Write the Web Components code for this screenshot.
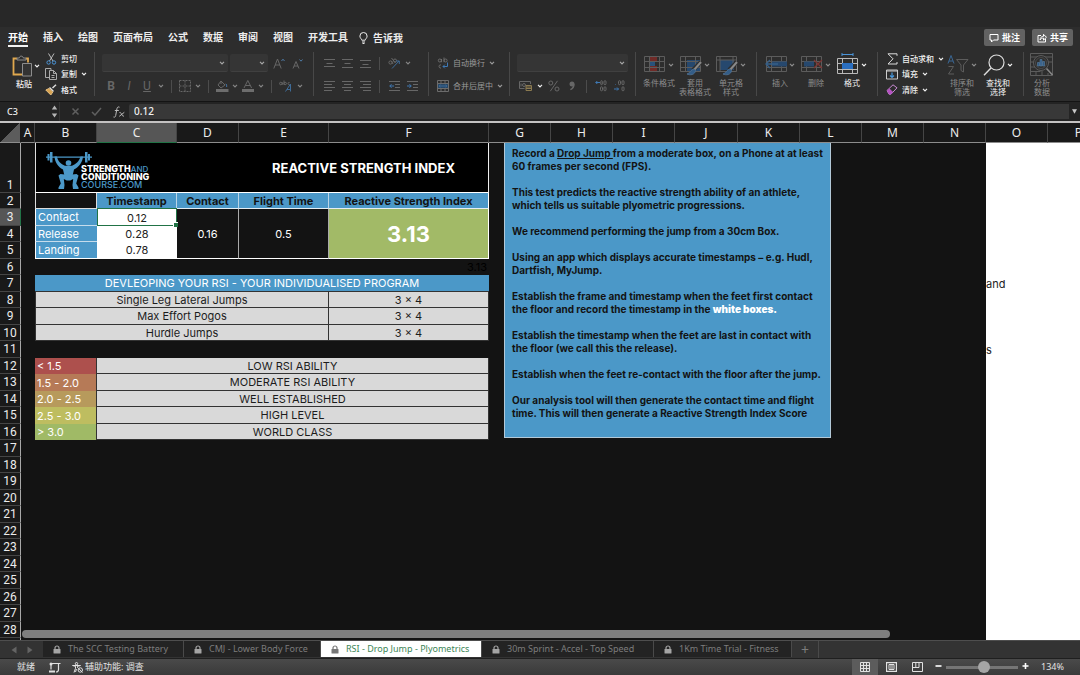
<!DOCTYPE html>
<html lang="zh-CN">
<head>
<meta charset="utf-8">
<title>Reactive Strength Index</title>
<style>
  html, body { margin: 0; height: 100%; background: #2d2d2d; }
  body { font-family: "Noto Sans", "Noto Sans CJK SC", sans-serif; color: #ececec; }
</style>
</head>
<body>
<spreadsheet-app></spreadsheet-app>

<script>
const chev = '<app-icon name="chev"></app-icon>';

const gridLines = (w, h) => `<path d="M.5 .5h${w - 1}v${h - 1}h-${w - 1}zM.5 ${Math.round(h / 3)}.5h${w - 1}M.5 ${Math.round(h * 2 / 3)}.5h${w - 1}M${Math.round(w / 4)}.5 .5v${h - 1}M${Math.round(w * 3 / 4) - 1}.5 .5v${h - 1}"/>`;

const ICONS = {
  chev: [6, 4, '<path d="M1 .8l2 2 2-2" stroke-width="1.2"/>'],
  bulb: [9, 12, '<path d="M2.8 8.2C2.6 6.900 .9 6 .9 4.100a3.600 3.600 0 0 1 7.200 0c0 1.900-1.700 2.800-1.900 4.100zM3 10h3M3.500 11.500h2"/>'],
  comment: [10, 10, '<path d="M1 1.500h8v5.500h-4.500l-2 2v-2h-1.500z"/>'],
  share: [10, 10, '<path d="M4 2.500h-3v6.500h7.500v-3M3 7c.3-2.500 1.500-3.700 3.500-3.700v-2l3 3-3 2.800v-2c-1.700 0-2.700.5-3.500 1.900z"/>'],
  paste: [20, 22, '<path d="M5 3.500H1.500v16H10M14 3.500h2v4" stroke="#e0a84e" stroke-width="1.800"/><path d="M5 5V3h2.300C7.500.5 11 .5 11.300 3H14v2z" stroke="#8d8d8d"/><path d="M10.500 8.500h9v12.500h-9z" stroke="#8d8d8d" fill="#333"/>'],
  cut: [11, 12, '<path d="M2.500.5l4.500 7.500M8 .5L3.500 8" stroke="#bbb"/><circle cx="2.600" cy="9.500" r="1.700" stroke="#4a94d8"/><circle cx="8" cy="9.500" r="1.700" stroke="#4a94d8"/>'],
  copy: [12, 12, '<path d="M6 2V.5H.5v9H4" /><path d="M4.500 2.500h4l3 3v6h-7zM8.500 2.500v3h3M6.500 7.500h3M6.500 9.500h3"/>'],
  brush: [12, 12, '<path d="M11 .8L7.500 4" stroke="#ddd" stroke-width="1.500"/><path d="M4.500 3.500l4 4" stroke="#ddd" stroke-width="1.500"/><path d="M4 4.500L.8 6l5 5 2-3z" fill="#d9a350" stroke="#e7c083"/>'],
  borders: [12, 12, '<path d="M.5.5h11v11H.5zM6 .5v11M.5 6h11" stroke-dasharray="2 1"/>'],
  fill: [13, 12, '<path d="M5 1l4 4-4 3-3-3zM5 1V4M9.500 4c1.500 1 1.500 2.500 1 3"/><path d="M10.500 4v3" stroke="#3d6790"/><path d="M0 10.500h12.500" stroke-width="3" stroke="#6d6d6d"/>'],
  fontcolor: [12, 12, '<path d="M2 8L5.800.5 9.600 8M3.300 5.500h5"/><path d="M0 10.500h12" stroke-width="3" stroke="#6d6d6d"/>'],
  fontup: [12, 11, '<path d="M.8 10.500L4.500 1l3.700 9.500M2 7h5"/><path d="M8.500 3l1.500-1.800L11.500 3" stroke="#4f7ba6"/>'],
  fontdown: [11, 11, '<path d="M1 10.500L4 3.500l3 7M2 8h4"/><path d="M7.500 1.500L9 3.200l1.500-1.700" stroke="#4f7ba6"/>'],
  phonetic: [14, 12, '<ellipse cx="1.800" cy="3.500" rx="1.200" ry="1.300"/><path d="M3.300 2.300v2.500M5 .5v4.300"/><circle cx="6.200" cy="3.500" r="1.200"/><path d="M10.500 2.500c-2-.6-2 2.700 0 2.200"/><path d="M6.500 11.500L11.500 4v7.500M8 9.500h3.500" stroke="#3f6b96"/>'],
  atop: [11, 9, '<path d="M0 .5h11M2.500 4.500h6M0 7.500h11"/>'],
  amid: [11, 9, '<path d="M0 .5h11M2.500 4.500h6M0 8.500h11"/>'],
  abot: [11, 9, '<path d="M0 1.500h11M2.500 5.500h6M0 8.500h11"/>'],
  left: [11, 11, '<path d="M0 .5h11M0 3.500h8M0 6.500h11M0 9.500h8"/>'],
  center: [11, 11, '<path d="M0 .5h11M2 3.500h7M0 6.500h11M2 9.500h7"/>'],
  right: [11, 11, '<path d="M0 .5h11M3 3.500h8M0 6.500h11M3 9.500h8"/>'],
  orient: [12, 12, '<circle cx="2.500" cy="5.500" r="1.600"/><path d="M3.500 4l1.500 3M3.500 1l4 5"/><circle cx="7" cy="3.500" r="1.500"/><path d="M4 11.500L11 4M8 4h3.300v3" stroke="#3f6b96"/>'],
  outdent: [11, 11, '<path d="M0 .5h11M6 3.500h5M6 6.500h5M0 9.500h11"/><path d="M5 5H.8M2.500 3.200L.8 5l1.700 1.800" stroke="#3f79b4"/>'],
  indent: [11, 11, '<path d="M0 .5h11M6 3.500h5M6 6.500h5M0 9.500h11"/><path d="M0 5h4.200M2.500 3.200L4.200 5 2.500 6.800" stroke="#3f79b4"/>'],
  wrap: [12, 12, '<circle cx="2.800" cy="3.500" r="1.500"/><path d="M4.500 2v3.200M7 .5v4.700"/><circle cx="8.600" cy="3.500" r="1.500"/><path d="M4 8c-2.600-.8-2.600 3.600 0 3"/><path d="M10.500 5.500v4H6M7.800 7.700L6 9.500l1.800 1.800" stroke="#3f79b4"/>'],
  merge: [12, 12, '<path d="M.5.5h11v11H.5zM4 .5v3M8 .5v3M4 8.500v3M8 8.500v3M.5 3.500h11M.5 8.500h11"/><path d="M1 4h10v4H1z" fill="#274766" stroke="none"/><path d="M2 6h8M3.500 4.800L2.200 6l1.300 1.200M8.500 4.800L9.800 6 8.500 7.200" stroke="#3f6b96"/>'],
  currency: [14, 10, '<path d="M5.500 7.500h-5v-7h11v2.500"/><circle cx="5" cy="4" r="1.500"/><path d="M2 2.500v3"/><path d="M7 4.500h5.500v5H7zM7 6h5.500M7 7.500h5.500" stroke="#8b7a50"/>'],
  percent: [12, 12, '<circle cx="2.800" cy="3" r="2"/><circle cx="9" cy="9" r="2"/><path d="M9.500.8L2.300 11.200"/>'],
  comma: [8, 10, '<path d="M5.900 3.200c0 3-1.500 4.500-3.500 5.500" stroke-width="1.500"/><circle cx="4" cy="3" r="2.500" fill="currentColor" stroke="none"/>'],
  incdec: [12, 12, '<rect x="5.800" y=".7" width="1.500" height="4" rx=".7"/><rect x="9" y=".7" width="2" height="4" rx="1"/><rect x="5.500" y="6.800" width="2" height="4" rx="1"/><rect x="9" y="6.800" width="2" height="4" rx="1"/><path d="M5 2.500H.8M2.300 1L.8 2.500 2.300 4" stroke="#3f79b4"/>'],
  decdec: [12, 12, '<rect x="5.500" y=".7" width="2" height="4" rx="1"/><rect x="9" y=".7" width="2" height="4" rx="1"/><rect x="9" y="6.800" width="2" height="4" rx="1"/><path d="M2.500 4.500v.5M1 9h4.500M4 7.500L5.500 9 4 10.500" stroke="#3f79b4"/>'],
  cond: [22, 22, '<path d="M5 2h8v5H5zM5 12h8v5H5z" fill="#702b28" stroke="none"/><path d="M5 7h6v5H5z" fill="#28527c" stroke="none"/><g transform="translate(0 2)">' + gridLines(21, 16) + '</g>'],
  tablefmt: [22, 22, '<path d="M7 6h13v11H7z" fill="#26486e" stroke="none"/><g transform="translate(0 2)">' + gridLines(21, 16) + '</g><path d="M21 8l-8 8" stroke="#2d2d2d" stroke-width="4"/><path d="M21 8l-7 8" stroke="#888" stroke-width="2"/><path d="M14 15c-3 0-3 4-7 5 3 1.500 8 1 8.500-3.500z" fill="#335d88" stroke="#4a6c8e"/>'],
  cellfmt: [22, 22, '<path d="M4 6h14v10H4z" fill="#26486e" stroke="none"/><g transform="translate(0 2)"><path d="M.5.5h20v15H.5zM.5 4h20M4 .5v15M17 .5V8"/></g><path d="M21 8l-8 8" stroke="#2d2d2d" stroke-width="4"/><path d="M21 8l-7 8" stroke="#888" stroke-width="2"/><path d="M14 15c-3 0-3 4-7 5 3 1.500 8 1 8.500-3.500z" fill="#335d88" stroke="#4a6c8e"/>'],
  insert: [22, 22, '<g transform="translate(1 2)">' + gridLines(21, 16) + '</g><path d="M7 7.500h15v5H7z" fill="#26486e" stroke="none"/><path d="M13 10H1M5 6l-4 4 4 4" stroke="#365f88" stroke-width="1.300"/>'],
  remove: [22, 22, '<g transform="translate(0 2)">' + gridLines(21, 16) + '</g><path d="M3 7.500h10v5H3z" fill="#26486e" stroke="none"/><path d="M13 6l8 8M21 6l-8 8" stroke="#7d3533" stroke-width="1.300"/>'],
  format: [22, 24, '<g transform="translate(0 5)">' + gridLines(21, 16) + '</g><path d="M5 10h11v6H5z" fill="#2b6fc0" stroke="none"/><path d="M5 1.500h11M5 0v3M16 0v3" stroke="#4a94d8"/>'],
  sigma: [11, 12, '<path d="M10 2.800V.8H1l5 5-5 5.200h9V9" stroke="#ddd"/>'],
  filldown: [12, 11, '<path d="M.5 1h11v9H.5zM.5 2h11" stroke="#ccc"/><path d="M6 3.500v5M4 6.500l2 2 2-2" stroke="#4a9ade" stroke-width="1.200"/>'],
  eraser: [12, 11, '<path d="M1 6.500L7 .8l4 3-6 6.400H3z" stroke="#c98bd3"/><path d="M1 6.500l2.500-2 3.500 3.500-2 2.200H3z" fill="#b552c2" stroke="none"/>'],
  sort: [22, 22, '<path d="M1 9.500L4 1.500l3 8M2 7h4" stroke="#3a6794"/><path d="M1.500 12.500h5l-5 7.500h5.500"/><path d="M9.500 5.500h11.500l-4.500 5.500v7l-2.500-1.500V11z"/>'],
  find: [22, 22, '<circle cx="13.500" cy="8.500" r="7.500" stroke="#ddd" stroke-width="1.200"/><path d="M8 14L1 21.300" stroke="#ddd" stroke-width="1.400"/>'],
  analyze: [24, 24, '<path d="M.5.5h22v22H.5zM.5 4h22M.5 9h4M.5 14h5M.5 18.500h10M18 9h5M6 18v5M12 18v5M18 20v3"/><circle cx="11" cy="10" r="7.500" fill="#2d2d2d"/><circle cx="11" cy="10" r="5.500" stroke-width=".6"/><path d="M16.500 15.500l6 6.500" stroke="#888" stroke-width="1.600"/><path d="M7.500 13V9.500h2V13zM10 13V6.500h2V13zM12.500 13V8.500h2V13z" fill="#315b86" stroke="#5d7f9f" stroke-width=".6"/>'],
  fx: [12, 12, '<path d="M6.500 1.200C4.500.2 4 2 3.700 4L2.700 9.500C2.400 11 1.500 11.600.5 11M1.800 4.500h4M6.500 6.500c2-1 2 4.500 4.500 3.500M11.300 6.300L6.300 10.300" stroke="#bbb"/>'],
  cancel: [9, 9, '<path d="M1.500 1.500l6 6M7.500 1.500l-6 6" stroke-width="1.500" stroke="#5f5f5f"/>'],
  enter: [11, 9, '<path d="M1 5l3 3 6-7" stroke-width="1.500" stroke="#5f5f5f"/>'],
  stepper: [7, 13, '<path d="M3.500.5l2.700 4H.8zM3.500 12.500l2.700-4H.8z" fill="#b5b5b5" stroke="none"/>'],
  down: [5, 5, '<path d="M0 .3h5l-2.500 4.500z" fill="#c8c8c8" stroke="none"/>'],
  prev: [6, 8, '<path d="M5.500.5v7L.5 4z" fill="#646464" stroke="none"/>'],
  next: [6, 8, '<path d="M.5.5v7l5-3.500z" fill="#646464" stroke="none"/>'],
  lock: [8, 9, '<path d="M2 4.500V3a2 2 0 0 1 4 0v1.500" stroke-width="1.200"/><rect x=".5" y="4" width="7" height="4.500" rx=".6" fill="currentColor" stroke="none"/>'],
  macro: [12, 11, '<path d="M2 3v4.500M3 1.500h8.500M9.500 1.500v6c0 2-1 2.500-2.500 2.500" stroke-width="1.200"/><circle cx="2" cy="2" r="1.500" fill="currentColor" stroke="none"/><path d="M0 9.500h6" stroke-width="2"/>'],
  access: [12, 11, '<circle cx="4.500" cy="1.700" r="1.200"/><path d="M.5 3.500l3 .8v2L2 10.500M8.500 3.500l-3 .8v1.500M4.500 7L3.500 10M.5 3.500h8"/><circle cx="8.300" cy="8" r="2.200"/><path d="M6.500 6.300L10.500 10.500"/>'],
  grid: [10, 10, '<path d="M.5.5h9v9h-9zM3.500.5v9M6.500.5v9M.5 3.500h9M.5 6.500h9"/>'],
  pagelayout: [11, 10, '<path d="M.5.5h10v9H.5z" stroke-width="1.300"/><path d="M3 2.500h5v5H3zM4 4h3M4 6h3"/>'],
  pagebreak: [11, 10, '<path d="M.5.5h10v9H.5zM.5 5.500h6.500v-5M3.800.5v5"/>'],
  minus: [7, 8, '<path d="M.5 4h6" stroke-width="1.600" stroke="#fff"/>'],
  plus: [7, 8, '<path d="M.5 4h6M3.500 1v6" stroke-width="1.600" stroke="#fff"/>'],
  lifter: [46, 37, '<g fill="#4b98c8" stroke="none"><path d="M0 4.500h46v1.300H0z"/><path d="M1.500 2h2v6.500h-2zM4 0h2.500v10.500H4zM42 2h2v6.500h-2zM39 0h2.500v10.500H39z"/><circle cx="22.500" cy="11" r="2.800"/><path d="M8.500 4.500L11 4.500C11.500 9 15 12 19 13.800h7C30 12 33.500 9 34.500 4.500h2.500C36.500 10.500 33 15 28 17.500L26.500 24H18.500L17 17.500C12 15 9 10.500 8.500 4.500z"/><path d="M18.500 22.500l-4-.5-2 1.500 2.300 8-2.300 4V37h5.500l.5-4-.7-6 3 1.500h3.400l3-1.500-.7 6 .5 4h5.500v-1.500l-2.300-4 2.300-8-2-1.500-4 .5z"/></g>']
};

/* Every component keeps its markup and its styles in an open shadow root. */
class Base extends HTMLElement {
  constructor() { super(); this.attachShadow({ mode: 'open' }); }
  connectedCallback() {
    const t = document.createElement('template');
    t.innerHTML = `<style>*{box-sizing:border-box}button{font:inherit;color:inherit;background:none;border:0;padding:0;margin:0}</style>` + this.view();
    this.shadowRoot.replaceChildren(t.content.cloneNode(true));
  }
}
const define = (name, view) => customElements.define(name, class extends Base { view() { return view(this); } });

define('app-icon', el => {
  const [w, h, body] = ICONS[el.getAttribute('name')];
  return `<style>:host{display:inline-flex;flex:none}svg{display:block}</style>
  <svg width="${w}" height="${h}" viewBox="0 0 ${w} ${h}" fill="none" stroke="currentColor" aria-hidden="true">${body}</svg>`;
});

define('menu-tabs', () => `
<style>
  :host { display: flex; align-items: center; height: 22px; padding: 0 7px 1px 8px; gap: 15px; font-size: 10px; line-height: 16px; font-weight: 600; background: #2d2d2d; }
  nav { display: contents; }
  a { color: inherit; text-decoration: none; white-space: nowrap; border-bottom: 2px solid transparent; }
  a.on { border-color: #f2f2f2; color: #fff; }
  .tell { display: flex; align-items: center; gap: 5px; margin-left: -4px; }
  .end { margin-left: auto; display: flex; gap: 7px; }
  .end button { display: flex; align-items: center; justify-content: center; gap: 3px; width: 41px; height: 17px; border-radius: 2px; background: #626262; font-size: 9px; color: #fff; }
</style>
<nav>${['开始', '插入', '绘图', '页面布局', '公式', '数据', '审阅', '视图', '开发工具'].map((t, i) => `<a href="#"${i ? '' : ' class="on"'}>${t}</a>`).join('')}</nav>
<button class="tell"><app-icon name="bulb"></app-icon>告诉我</button>
<div class="end"><button><app-icon name="comment"></app-icon>批注</button><button><app-icon name="share"></app-icon>共享</button></div>`);

define('ribbon-group', () => `
<style>
  :host { display: flex; flex: none; height: 44px; border-right: 1px solid #484848; }
  :host(:last-of-type) { border-right: 0; }
</style><slot></slot>`);

define('ribbon-tile', el => `
<style>
  :host { display: block; width: 36px; flex: none; color: #8d8d8d; --ink: #5c5c5c; }
  :host([on]) { color: #f4f4f4; --ink: #b9b9b9; }
  button { display: block; width: 100%; }
  .top { display: flex; align-items: center; justify-content: center; gap: 2px; height: 26px; }
  .pic { color: var(--ink); display: flex; }
  .label { display: block; font-size: 8px; line-height: 9px; text-align: center; white-space: nowrap; }
</style>
<button><span class="top"><span class="pic"><app-icon name="${el.getAttribute('icon')}"></app-icon></span>${el.hasAttribute('plain') ? '' : chev}</span>
<span class="label"><slot></slot></span></button>`);

const ib = (icon, label, w = 's') => `<button class="${w}" aria-label="${label}"><app-icon name="${icon}"></app-icon></button>`;
const cb = label => `<button class="c" aria-label="${label}">${chev}</button>`;
const sep = '<i></i>';

define('ribbon-bar', () => `
<style>
  :host { display: flex; padding: 3px 0 5px; height: 53px; background: #2d2d2d; border-bottom: 1px solid #141414; color: #676767; font-size: 8px; line-height: 12px; }
  .rows { display: flex; flex-direction: column; gap: 5px; padding-top: 2px; }
  .row { display: flex; align-items: center; height: 18px; }
  .row button { display: flex; align-items: center; justify-content: center; height: 18px; }
  .s { width: 18px; } .n { width: 16px; } .c { width: 10px; color: #858585; }
  .l { font: 12px "Roboto", sans-serif; }
  .l b { font-weight: 700; }
  i { width: 1px; height: 13px; margin: 0 5px; background: #4c4c4c; }
  .pick { position: relative; height: 18px; }
  .pick app-icon { position: absolute; right: 3px; top: 7px; color: #a5a5a5; }
  select { appearance: none; width: 100%; height: 100%; border: 0; border-bottom: 1px solid #404040; border-radius: 2px; background: #353535; }
  .font { width: 126px; margin-right: 2px; } .size { width: 38px; margin-right: 2px; } .num { width: 111px; }
  .lines { display: flex; flex-direction: column; gap: 3px; padding-top: 1px; }
  .line { display: flex; align-items: center; gap: 4px; height: 13px; color: #f0f0f0; white-space: nowrap; font-weight: 500; }
  .line app-icon:first-child { width: 12px; justify-content: center; color: #aaa; }
  .clip { width: 95px; } .fontg { width: 219px; padding-left: 7px; } .al { width: 115px; padding-left: 6px; }
  .wr { width: 81px; padding-left: 8px; } .nu { width: 126px; padding-left: 7px; }
  .tiles { width: 121px; padding-left: 5px; } .ed { width: 146px; padding-left: 8px; }
  .ed .lines { width: 58px; }
  .wr button { gap: 4px; color: #9a9a9a; } .wr button app-icon:first-child { color: #6c6c6c; }
  .paste { position: relative; display: flex; flex-direction: column; align-items: center; gap: 1px; width: 24px; margin: 3px 9px 0 12px; color: #f0f0f0; font-weight: 500; }
  .paste app-icon:first-child { align-self: flex-start; }
  .paste app-icon + app-icon { position: absolute; right: -4px; top: 9px; }
  .lit .c { color: #eee; }
</style>
<ribbon-group class="clip">
  <button class="paste"><app-icon name="paste"></app-icon>粘贴${chev}</button>
  <div class="lines">
    <button class="line"><app-icon name="cut"></app-icon>剪切</button>
    <button class="line"><app-icon name="copy"></app-icon>复制${chev}</button>
    <button class="line"><app-icon name="brush"></app-icon>格式</button>
  </div>
</ribbon-group>
<ribbon-group class="fontg"><div class="rows">
  <div class="row"><div class="pick font"><select aria-label="字体"></select>${chev}</div><div class="pick size"><select aria-label="字号"></select>${chev}</div>${ib('fontup', '增大字号')}${ib('fontdown', '减小字号')}</div>
  <div class="row"><button class="s l"><b>B</b></button><button class="s l"><em>I</em></button><button class="s l"><u>U</u></button>${cb('下划线')}${sep}${ib('borders', '边框', 'n')}${cb('边框选项')}${sep}${ib('fill', '填充颜色', 'n')}${cb('填充选项')}${ib('fontcolor', '字体颜色', 'n')}${cb('颜色选项')}${sep}${ib('phonetic', '拼音')}${cb('拼音选项')}</div>
</div></ribbon-group>
<ribbon-group class="al"><div class="rows">
  <div class="row">${ib('atop', '顶端对齐')}${ib('amid', '垂直居中')}${ib('abot', '底端对齐')}${sep}${ib('orient', '方向')}${cb('方向选项')}</div>
  <div class="row">${ib('left', '左对齐')}${ib('center', '居中')}${ib('right', '右对齐')}${sep}${ib('outdent', '减少缩进')}${ib('indent', '增加缩进')}</div>
</div></ribbon-group>
<ribbon-group class="wr"><div class="rows">
  <div class="row"><button><app-icon name="wrap"></app-icon>自动换行${chev}</button></div>
  <div class="row"><button><app-icon name="merge"></app-icon>合并后居中${chev}</button></div>
</div></ribbon-group>
<ribbon-group class="nu"><div class="rows">
  <div class="row"><div class="pick num"><select aria-label="数字格式"></select>${chev}</div></div>
  <div class="row">${ib('currency', '货币')}<span class="lit">${cb('货币选项')}</span>${ib('percent', '百分比')}${ib('comma', '千位分隔')}${sep}${ib('incdec', '增加小数位')}${ib('decdec', '减少小数位')}</div>
</div></ribbon-group>
<ribbon-group class="tiles"><ribbon-tile icon="cond">条件格式</ribbon-tile><ribbon-tile icon="tablefmt">套用<br>表格格式</ribbon-tile><ribbon-tile icon="cellfmt">单元格<br>样式</ribbon-tile></ribbon-group>
<ribbon-group class="tiles"><ribbon-tile icon="insert">插入</ribbon-tile><ribbon-tile icon="remove">删除</ribbon-tile><ribbon-tile icon="format" on>格式</ribbon-tile></ribbon-group>
<ribbon-group class="ed">
  <div class="lines">
    <button class="line"><app-icon name="sigma"></app-icon>自动求和${chev}</button>
    <button class="line"><app-icon name="filldown"></app-icon>填充${chev}</button>
    <button class="line"><app-icon name="eraser"></app-icon>清除${chev}</button>
  </div>
  <ribbon-tile icon="sort">排序和<br>筛选</ribbon-tile><ribbon-tile icon="find" on>查找和<br>选择</ribbon-tile>
</ribbon-group>
<ribbon-group><ribbon-tile icon="analyze" plain>分析<br>数据</ribbon-tile></ribbon-group>`);

define('formula-bar', () => `
<style>
  :host { display: flex; align-items: center; height: 21px; border-bottom: 2px solid #c4c2c2; background: #242424; }
  input { border: 0; outline: 0; margin: 0; padding: 0; background: none; color: #f0f0f0; font: 500 10px/15px "Noto Sans", sans-serif; height: 15px; }
  .name { width: 44px; margin-left: 7px; font-size: 9px; }
  .box { display: flex; align-items: center; width: 60px; height: 100%; border-right: 1px solid #333; }
  .acts { display: flex; align-items: center; gap: 11px; padding: 0 5px 0 11px; width: 69px; }
  .f { flex: 1; background: #383838; padding-left: 5px; border-radius: 2px 0 0 2px; }
  .dn { width: 11px; display: flex; justify-content: center; }
</style>
<div class="box"><input class="name" aria-label="名称框" value="C3"><app-icon name="stepper"></app-icon></div>
<div class="acts"><app-icon name="cancel"></app-icon><app-icon name="enter"></app-icon><app-icon name="fx"></app-icon></div>
<input class="f" aria-label="编辑栏" value="0.12"><button class="dn" aria-label="展开编辑栏"><app-icon name="down"></app-icon></button>`);

define('brand-logo', () => `
<style>
  :host { display: flex; padding: 9px 0 0 10px; height: 49px; font: 800 9px/8px "Inter", sans-serif; color: #fff; text-align: left; }
  div { margin: 13px 0 0 -11px; white-space: nowrap; }
  p { margin: 0; display: flex; }
  .b, span { color: #4b98c8; font-weight: 500; }
  span { font-size: 8px; }
</style>
<app-icon name="lifter"></app-icon><div><p>STRENGTH<span>AND</span></p><p>CONDITIONING</p><p class="b">COURSE.COM</p></div>`);

define('sheet-grid', () => {
  const cols = 'ABCDEFGHIJKLMNOP'.split('');
  const rows = [];
  const tail = t => `<td colspan="8"></td><td class="w">${t || ''}</td><td class="w"></td>`;
  const body = {
    1: '<td colspan="3" class="k kl"><brand-logo></brand-logo></td><td colspan="2" class="k kr title">REACTIVE STRENGTH INDEX</td>',
    2: '<td class="k2"></td><td class="h">Timestamp</td><td class="h">Contact</td><td class="h">Flight Time</td><td class="h hr">Reactive Strength Index</td>',
    3: '<td class="lab">Contact</td><td class="v sel">0.12<span class="ring"></span></td><td rowspan="3" class="m">0.16</td><td rowspan="3" class="m">0.5</td><td rowspan="3" class="big">3.13</td>',
    4: '<td class="lab">Release</td><td class="v">0.28</td>',
    5: '<td class="lab last">Landing</td><td class="v last">0.78</td>',
    6: '<td colspan="4"></td><td class="ghost">3.13</td>',
    7: '<td colspan="5" class="prog">DEVLEOPING YOUR RSI - YOUR INDIVIDUALISED PROGRAM</td>'
  };
  ['Single Leg Lateral Jumps', 'Max Effort Pogos', 'Hurdle Jumps'].forEach((t, i) => body[8 + i] = `<td colspan="4" class="g gl">${t}</td><td class="g">3 x 4</td>`);
  [['&lt; 1.5', 'LOW RSI ABILITY', '#ad504d'], ['1.5 - 2.0', 'MODERATE RSI ABILITY', '#b67a57'], ['2.0 - 2.5', 'WELL ESTABLISHED', '#b79a5c'], ['2.5 - 3.0', 'HIGH LEVEL', '#bebd60'], ['&gt; 3.0', 'WORLD CLASS', '#a0ba66']]
    .forEach(([a, b, c], i) => body[12 + i] = `<td class="band" style="background:${c}">${a}</td><td colspan="4" class="g">${b}</td>`);
  for (let r = 1; r <= 28; r++) {
    rows.push(`<tr class="${r === 1 ? 'first' : r % 2 ? 'odd' : 'even'}"><th scope="row" class="${r === 3 ? 'act' : ''}">${r}</th><td></td>${body[r] || '<td colspan="5"></td>'}${tail(r === 7 ? 'and' : r === 11 ? 's' : '')}</tr>`);
  }
  return `
<style>
  :host { display: block; position: relative; flex: 1; min-height: 0; overflow: hidden; background: linear-gradient(90deg, #191919 20px, #a8a8a8 20px 21px, #131313 21px 986px, #fff 986px); font: 11px/14px "Inter", sans-serif; }
  table { table-layout: fixed; border-collapse: separate; border-spacing: 0; width: 1110px; }
  .c0 { width: 21px; } .cA { width: 14px; } .cC { width: 80px; } .cE { width: 90px; } .cF { width: 160px; } .cJ { width: 63px; } col { width: 62px; }
  th, td { padding: 0; font-weight: 400; overflow: hidden; white-space: nowrap; text-align: center; }
  thead th { height: 20px; background: #191919; border-right: 1px solid #454545; border-bottom: 1px solid #8c8c8c; font: 12px/16px "Noto Sans", sans-serif; color: #ececec; }
  thead .hc { background: #565656; border-bottom-color: #217346; }
  thead .corner { background: linear-gradient(135deg, #191919 50%, #5c5c5c 50%); border-right-color: #191919; }
  tbody th { background: #191919; border-right: 1px solid #a8a8a8; border-bottom: 1px solid #454545; color: #ececec; font: 12px/14px "Roboto", sans-serif; }
  tbody th.act { background: #565656; border-right-color: #217346; }
  .first { height: 50px; } .first th { vertical-align: bottom; }
  .odd { height: 17px; } .even { height: 16px; }
  td { background: #131313; }
  td.w { background: #fff; color: #222; text-align: left; }
  .k { background: #000; border-bottom: 1px solid #fff; }
  .kl { border-left: 1px solid #ddd; vertical-align: top; } .kr { border-right: 1px solid #eee; }
  .title { font-size: 13px; line-height: 18px; font-weight: 700; color: #fff; }
  .k2 { border-left: 1px solid #ddd; border-bottom: 1px solid #ddd; border-right: 1px solid #ddd; }
  .h { background: #4b98c8; color: #131313; font-weight: 700; border-right: 1px solid #b9d4e6; border-bottom: 1px solid #e4eef5; }
  .h.hr { border-right-color: #fff; }
  .lab { background: #4b98c8; color: #fff; text-align: left; padding-left: 2px; border-left: 1px solid #fff; border-bottom: 1px solid #c5dcec; }
  .v { background: #fff; color: #222; } .last { border-bottom: 1px solid #fff; }
  .sel { position: relative; overflow: visible; }
  .ring { position: absolute; inset: -1px 0 0; border: 1px solid #217346; }
  .ring::after { content: ""; position: absolute; right: -2px; bottom: -2px; width: 4px; height: 4px; background: #217346; border: 1px solid #fff; border-width: 1px 0 0 1px; }
  .m { color: #fff; border-right: 1px solid #aaa; border-bottom: 1px solid #fff; }
  .big { background: #a2ba67; color: #fff; font-size: 22px; line-height: 28px; font-weight: 700; border-right: 1px solid #fff; border-bottom: 1px solid #fff; }
  .ghost { text-align: right; color: #000; padding-right: 2px; }
  .prog { background: #4b98c8; color: #fff; border-bottom: 1px solid #333; }
  .g { background: #d9d9d9; color: #1c1c1c; border-bottom: 1px solid #333; border-right: 1px solid #333; }
  .gl { border-left: 1px solid #333; }
  .band { color: #fff; text-align: left; padding-left: 2px; border-right: 1px solid #333; }
  .note { position: absolute; left: 504px; top: 20px; width: 327px; height: 295px; padding: 4px 0 0 7px; border: 1px solid #b3c9d8; border-top: 0; background: #4b98c8; color: #131313; font: 700 10px/13px "Inter", sans-serif; }
  .note p { margin: 0 0 13px; white-space: nowrap; }
  .note strong { color: #fff; }
  .bar { position: absolute; left: 22px; right: 190px; bottom: 2px; height: 8px; border-radius: 4px; background: #7e7e7e; }
</style>
<table>
  <colgroup><col class="c0">${cols.map(c => `<col class="c${c}">`).join('')}</colgroup>
  <thead><tr><th class="corner" aria-label="全选"></th>${cols.map(c => `<th scope="col" class="h${c.toLowerCase()}">${c}</th>`).join('')}</tr></thead>
  <tbody>${rows.join('')}</tbody>
</table>
<section class="note">
  <p>Record a <u>Drop Jump </u>from a moderate box, on a Phone at at least<br>60 frames per second (FPS).</p>
  <p>This test predicts the reactive strength ability of an athlete,<br>which tells us suitable plyometric progressions.</p>
  <p>We recommend performing the jump from a 30cm Box.</p>
  <p>Using an app which displays accurate timestamps – e.g. Hudl,<br>Dartfish, MyJump.</p>
  <p>Establish the frame and timestamp when the feet first contact<br>the floor and record the timestamp in the <strong>white boxes.</strong></p>
  <p>Establish the timestamp when the feet are last in contact with<br>the floor (we call this the release).</p>
  <p>Establish when the feet re-contact with the floor after the jump.</p>
  <p>Our analysis tool will then generate the contact time and flight<br>time. This will then generate a Reactive Strength Index Score</p>
</section>
<div class="bar"></div>`;
});

define('sheet-tabs', () => `
<style>
  :host { display: flex; height: 18px; background: #333; border-top: 1px solid #4e4e4e; font: 9px/16px "Noto Sans", sans-serif; color: #7c7c7c; }
  .nav { display: flex; align-items: center; gap: 10px; width: 43px; padding-left: 11px; }
  a { display: flex; align-items: center; padding-left: 10px; gap: 7px; height: 16px; background: #232323; color: inherit; text-decoration: none; white-space: nowrap; border-right: 1px solid #4a4a4a; }
  a app-icon { color: #a5a5a5; }
  a.on { background: #fff; color: #3c8556; } a.on app-icon { color: #777; }
  .t0 { width: 141px; } .t1 { width: 137px; } .t2 { width: 161px; } .t3 { width: 172px; } .t4 { width: 138px; }
  .add { width: 27px; border-right: 1px solid #4a4a4a; font-size: 14px; }
</style>
<div class="nav"><app-icon name="prev"></app-icon><app-icon name="next"></app-icon></div>
${['The SCC Testing Battery', 'CMJ - Lower Body Force', 'RSI - Drop Jump - Plyometrics', '30m Sprint - Accel - Top Speed', '1Km Time Trial - Fitness'].map((t, i) => `<a href="#" class="t${i}${i === 2 ? ' on' : ''}"><app-icon name="lock"></app-icon>${t}</a>`).join('')}
<button class="add" aria-label="新建工作表">+</button>`);

define('status-bar', () => `
<style>
  :host { display: flex; align-items: center; height: 17px; border-top: 1px solid #1f1f1f; background: linear-gradient(#4a4a4a, #3a3a3a); font-size: 9px; line-height: 14px; color: #e2e2e2; }
  .st { margin: 0 14px 0 17px; }
  .acc { display: flex; align-items: center; gap: 1px; margin-left: 11px; }
  .end { display: flex; align-items: center; margin-left: auto; }
  .view { display: flex; align-items: center; justify-content: center; width: 26px; height: 16px; }
  .view.on { background: #5c5c5c; }
  input { appearance: none; width: 72px; height: 12px; margin: 0 4px; background: linear-gradient(#757575, #757575) center / 100% 3px no-repeat; }
  input::-webkit-slider-thumb { appearance: none; width: 12px; height: 12px; border-radius: 50%; background: #a6a6a6; }
  .z { width: 51px; padding-left: 12px; }
  .minus { margin-left: 5px; }
</style>
<span class="st">就绪</span><app-icon name="macro"></app-icon><button class="acc"><app-icon name="access"></app-icon>辅助功能: 调查</button>
<div class="end">
  <button class="view on" aria-label="普通"><app-icon name="grid"></app-icon></button><button class="view" aria-label="页面布局"><app-icon name="pagelayout"></app-icon></button><button class="view" aria-label="分页预览"><app-icon name="pagebreak"></app-icon></button>
  <button class="minus" aria-label="缩小"><app-icon name="minus"></app-icon></button><input type="range" aria-label="缩放" min="0" max="100" value="54"><button aria-label="放大"><app-icon name="plus"></app-icon></button><span class="z">134%</span>
</div>`);

define('spreadsheet-app', () => `
<style>
  :host { display: flex; flex-direction: column; height: 100vh; overflow: hidden; }
  header { height: 27px; background: #282828; flex: none; }
  menu-tabs, ribbon-bar, formula-bar, sheet-tabs, status-bar { flex: none; }
</style>
<header></header>
<menu-tabs></menu-tabs>
<ribbon-bar></ribbon-bar>
<formula-bar></formula-bar>
<sheet-grid></sheet-grid>
<sheet-tabs></sheet-tabs>
<status-bar></status-bar>`);
</script>
</body>
</html>
